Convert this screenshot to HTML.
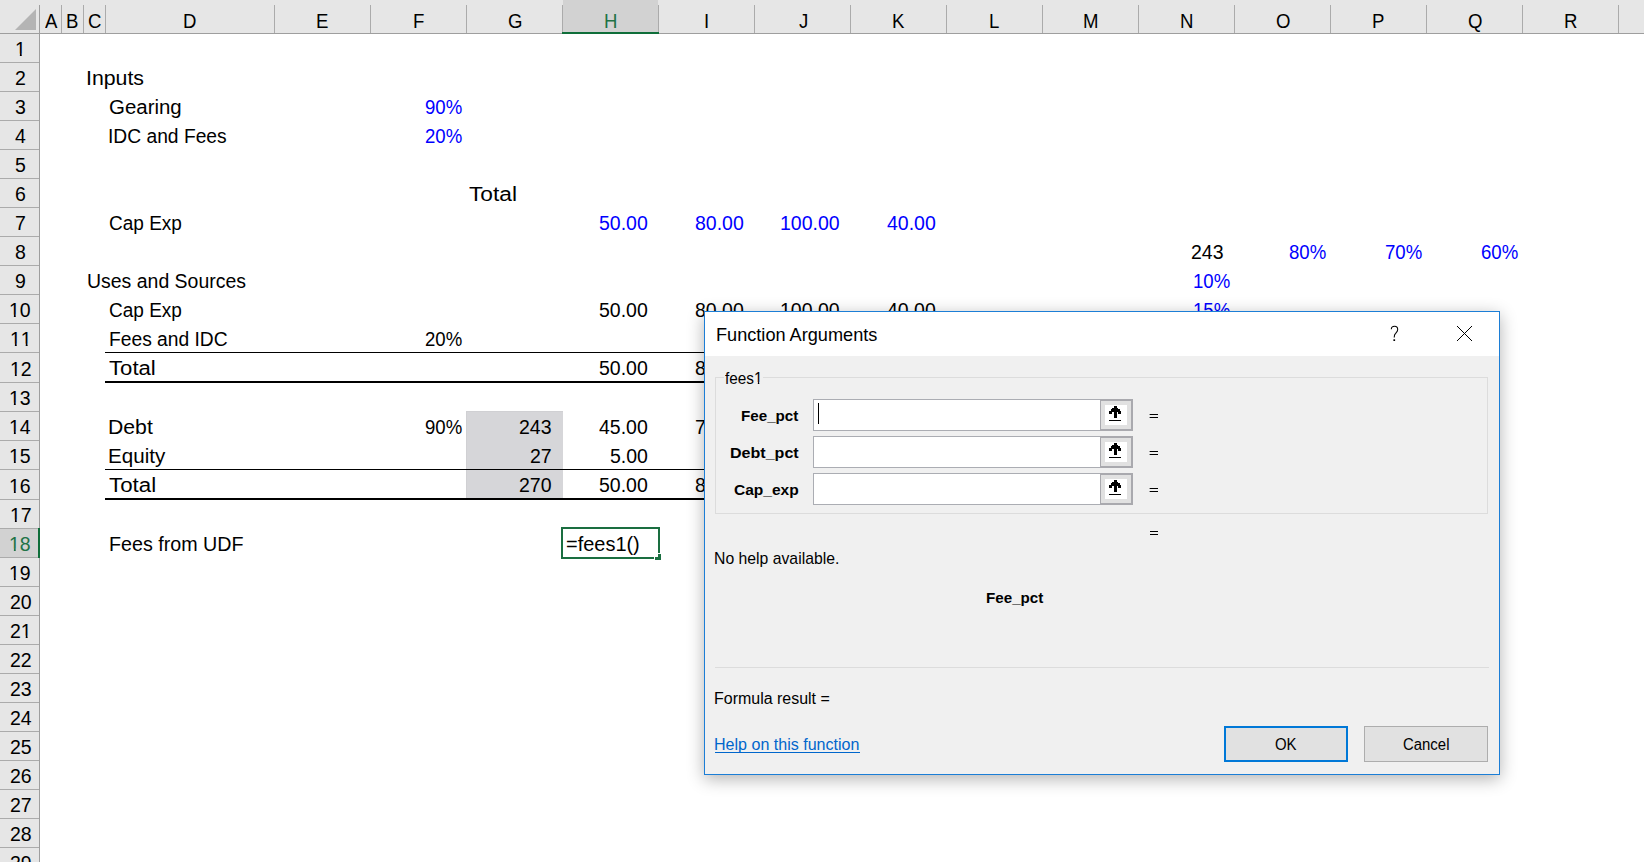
<!DOCTYPE html>
<html><head><meta charset="utf-8"><style>
html,body{margin:0;padding:0;background:#fff;width:1644px;height:862px;overflow:hidden;position:relative}
.t{position:absolute;font-family:"Liberation Sans",sans-serif;white-space:nowrap;line-height:normal;transform-origin:0 0}
.r{position:absolute;box-sizing:content-box}
.one{display:inline-block;clip-path:polygon(0 0,100% 0,100% 0.79em,0.345em 0.79em,0.345em 2em,0.25em 2em,0.25em 0.79em,0 0.79em)}
</style></head><body>
<div class="r" style="left:0px;top:0px;width:1644px;height:33px;background:#E6E6E6;"></div>
<div class="r" style="left:0px;top:33px;width:1644px;height:1px;background:#9E9E9E;"></div>
<div class="r" style="left:0px;top:34px;width:39px;height:828px;background:#E6E6E6;"></div>
<div class="r" style="left:39px;top:5px;width:1px;height:857px;background:#9E9E9E;"></div>
<svg class="r" style="left:0;top:0" width="40" height="34"><polygon points="36,9 36,30 15,30" fill="#B4B4B4"/></svg>
<div class="r" style="left:563px;top:0px;width:95px;height:32px;background:#D2D2D2;"></div>
<div class="r" style="left:61px;top:5px;width:1px;height:28px;background:#ABABAB;"></div>
<div class="r" style="left:83px;top:5px;width:1px;height:28px;background:#ABABAB;"></div>
<div class="r" style="left:105px;top:5px;width:1px;height:28px;background:#ABABAB;"></div>
<div class="r" style="left:274px;top:5px;width:1px;height:28px;background:#ABABAB;"></div>
<div class="r" style="left:370px;top:5px;width:1px;height:28px;background:#ABABAB;"></div>
<div class="r" style="left:466px;top:5px;width:1px;height:28px;background:#ABABAB;"></div>
<div class="r" style="left:562px;top:5px;width:1px;height:28px;background:#ABABAB;"></div>
<div class="r" style="left:658px;top:5px;width:1px;height:28px;background:#ABABAB;"></div>
<div class="r" style="left:754px;top:5px;width:1px;height:28px;background:#ABABAB;"></div>
<div class="r" style="left:850px;top:5px;width:1px;height:28px;background:#ABABAB;"></div>
<div class="r" style="left:946px;top:5px;width:1px;height:28px;background:#ABABAB;"></div>
<div class="r" style="left:1042px;top:5px;width:1px;height:28px;background:#ABABAB;"></div>
<div class="r" style="left:1138px;top:5px;width:1px;height:28px;background:#ABABAB;"></div>
<div class="r" style="left:1234px;top:5px;width:1px;height:28px;background:#ABABAB;"></div>
<div class="r" style="left:1330px;top:5px;width:1px;height:28px;background:#ABABAB;"></div>
<div class="r" style="left:1426px;top:5px;width:1px;height:28px;background:#ABABAB;"></div>
<div class="r" style="left:1522px;top:5px;width:1px;height:28px;background:#ABABAB;"></div>
<div class="r" style="left:1618px;top:5px;width:1px;height:28px;background:#ABABAB;"></div>
<div class="r" style="left:562px;top:32px;width:97px;height:2px;background:#0F6E3A;"></div>
<div class="t" style="left:44.59px;top:9.89px;font-size:20.0px;color:#000;font-weight:400;transform:scaleX(0.9300)">A</div>
<div class="t" style="left:66.31px;top:9.89px;font-size:20.0px;color:#000;font-weight:400;transform:scaleX(0.9300)">B</div>
<div class="t" style="left:87.99px;top:9.89px;font-size:20.0px;color:#000;font-weight:400;transform:scaleX(0.9300)">C</div>
<div class="t" style="left:183.26px;top:9.89px;font-size:20.0px;color:#000;font-weight:400;transform:scaleX(0.9300)">D</div>
<div class="t" style="left:316.22px;top:9.89px;font-size:20.0px;color:#000;font-weight:400;transform:scaleX(0.9300)">E</div>
<div class="t" style="left:412.73px;top:9.89px;font-size:20.0px;color:#000;font-weight:400;transform:scaleX(0.9300)">F</div>
<div class="t" style="left:507.80px;top:9.89px;font-size:20.0px;color:#000;font-weight:400;transform:scaleX(0.9300)">G</div>
<div class="t" style="left:604.08px;top:9.89px;font-size:20.0px;color:#217346;font-weight:400;transform:scaleX(0.9300)">H</div>
<div class="t" style="left:704.22px;top:9.89px;font-size:20.0px;color:#000;font-weight:400;transform:scaleX(0.9300)">I</div>
<div class="t" style="left:798.71px;top:9.89px;font-size:20.0px;color:#000;font-weight:400;transform:scaleX(0.9300)">J</div>
<div class="t" style="left:891.94px;top:9.89px;font-size:20.0px;color:#000;font-weight:400;transform:scaleX(0.9300)">K</div>
<div class="t" style="left:989.17px;top:9.89px;font-size:20.0px;color:#000;font-weight:400;transform:scaleX(0.9300)">L</div>
<div class="t" style="left:1083.06px;top:9.89px;font-size:20.0px;color:#000;font-weight:400;transform:scaleX(0.9300)">M</div>
<div class="t" style="left:1180.08px;top:9.89px;font-size:20.0px;color:#000;font-weight:400;transform:scaleX(0.9300)">N</div>
<div class="t" style="left:1275.57px;top:9.89px;font-size:20.0px;color:#000;font-weight:400;transform:scaleX(0.9300)">O</div>
<div class="t" style="left:1372.31px;top:9.89px;font-size:20.0px;color:#000;font-weight:400;transform:scaleX(0.9300)">P</div>
<div class="t" style="left:1467.57px;top:9.89px;font-size:20.0px;color:#000;font-weight:400;transform:scaleX(0.9300)">Q</div>
<div class="t" style="left:1563.76px;top:9.89px;font-size:20.0px;color:#000;font-weight:400;transform:scaleX(0.9300)">R</div>
<div class="r" style="left:0px;top:529px;width:39px;height:28px;background:#D2D2D2;"></div>
<div class="r" style="left:0px;top:62px;width:39px;height:1px;background:#ABABAB;"></div>
<div class="r" style="left:0px;top:91px;width:39px;height:1px;background:#ABABAB;"></div>
<div class="r" style="left:0px;top:120px;width:39px;height:1px;background:#ABABAB;"></div>
<div class="r" style="left:0px;top:149px;width:39px;height:1px;background:#ABABAB;"></div>
<div class="r" style="left:0px;top:178px;width:39px;height:1px;background:#ABABAB;"></div>
<div class="r" style="left:0px;top:207px;width:39px;height:1px;background:#ABABAB;"></div>
<div class="r" style="left:0px;top:236px;width:39px;height:1px;background:#ABABAB;"></div>
<div class="r" style="left:0px;top:265px;width:39px;height:1px;background:#ABABAB;"></div>
<div class="r" style="left:0px;top:294px;width:39px;height:1px;background:#ABABAB;"></div>
<div class="r" style="left:0px;top:323px;width:39px;height:1px;background:#ABABAB;"></div>
<div class="r" style="left:0px;top:352px;width:39px;height:1px;background:#ABABAB;"></div>
<div class="r" style="left:0px;top:382px;width:39px;height:1px;background:#ABABAB;"></div>
<div class="r" style="left:0px;top:411px;width:39px;height:1px;background:#ABABAB;"></div>
<div class="r" style="left:0px;top:440px;width:39px;height:1px;background:#ABABAB;"></div>
<div class="r" style="left:0px;top:469px;width:39px;height:1px;background:#ABABAB;"></div>
<div class="r" style="left:0px;top:499px;width:39px;height:1px;background:#ABABAB;"></div>
<div class="r" style="left:0px;top:528px;width:39px;height:1px;background:#ABABAB;"></div>
<div class="r" style="left:0px;top:557px;width:39px;height:1px;background:#ABABAB;"></div>
<div class="r" style="left:0px;top:586px;width:39px;height:1px;background:#ABABAB;"></div>
<div class="r" style="left:0px;top:615px;width:39px;height:1px;background:#ABABAB;"></div>
<div class="r" style="left:0px;top:644px;width:39px;height:1px;background:#ABABAB;"></div>
<div class="r" style="left:0px;top:673px;width:39px;height:1px;background:#ABABAB;"></div>
<div class="r" style="left:0px;top:702px;width:39px;height:1px;background:#ABABAB;"></div>
<div class="r" style="left:0px;top:731px;width:39px;height:1px;background:#ABABAB;"></div>
<div class="r" style="left:0px;top:760px;width:39px;height:1px;background:#ABABAB;"></div>
<div class="r" style="left:0px;top:789px;width:39px;height:1px;background:#ABABAB;"></div>
<div class="r" style="left:0px;top:818px;width:39px;height:1px;background:#ABABAB;"></div>
<div class="r" style="left:0px;top:847px;width:39px;height:1px;background:#ABABAB;"></div>
<div class="r" style="left:38px;top:528px;width:2px;height:30px;background:#0F6E3A;"></div>
<div class="t" style="left:14.92px;top:37.89px;font-size:20.0px;color:#000;font-weight:400;transform:scaleX(0.9750)"><span class="one">1</span></div>
<div class="t" style="left:15.19px;top:66.89px;font-size:20.0px;color:#000;font-weight:400;transform:scaleX(0.9750)">2</div>
<div class="t" style="left:15.24px;top:95.89px;font-size:20.0px;color:#000;font-weight:400;transform:scaleX(0.9750)">3</div>
<div class="t" style="left:15.24px;top:124.89px;font-size:20.0px;color:#000;font-weight:400;transform:scaleX(0.9750)">4</div>
<div class="t" style="left:15.19px;top:153.89px;font-size:20.0px;color:#000;font-weight:400;transform:scaleX(0.9750)">5</div>
<div class="t" style="left:15.12px;top:182.89px;font-size:20.0px;color:#000;font-weight:400;transform:scaleX(0.9750)">6</div>
<div class="t" style="left:15.16px;top:211.89px;font-size:20.0px;color:#000;font-weight:400;transform:scaleX(0.9750)">7</div>
<div class="t" style="left:15.19px;top:240.89px;font-size:20.0px;color:#000;font-weight:400;transform:scaleX(0.9750)">8</div>
<div class="t" style="left:15.16px;top:269.89px;font-size:20.0px;color:#000;font-weight:400;transform:scaleX(0.9750)">9</div>
<div class="t" style="left:9.41px;top:298.89px;font-size:20.0px;color:#000;font-weight:400;transform:scaleX(0.9750)"><span class="one">1</span>0</div>
<div class="t" style="left:10.22px;top:327.89px;font-size:20.0px;color:#000;font-weight:400;transform:scaleX(0.9750)"><span class="one">1</span><span class="one">1</span></div>
<div class="t" style="left:9.53px;top:357.89px;font-size:20.0px;color:#000;font-weight:400;transform:scaleX(0.9750)"><span class="one">1</span>2</div>
<div class="t" style="left:9.46px;top:386.89px;font-size:20.0px;color:#000;font-weight:400;transform:scaleX(0.9750)"><span class="one">1</span>3</div>
<div class="t" style="left:9.31px;top:415.89px;font-size:20.0px;color:#000;font-weight:400;transform:scaleX(0.9750)"><span class="one">1</span>4</div>
<div class="t" style="left:9.44px;top:444.89px;font-size:20.0px;color:#000;font-weight:400;transform:scaleX(0.9750)"><span class="one">1</span>5</div>
<div class="t" style="left:9.46px;top:474.89px;font-size:20.0px;color:#000;font-weight:400;transform:scaleX(0.9750)"><span class="one">1</span>6</div>
<div class="t" style="left:9.53px;top:503.89px;font-size:20.0px;color:#000;font-weight:400;transform:scaleX(0.9750)"><span class="one">1</span>7</div>
<div class="t" style="left:9.46px;top:532.89px;font-size:20.0px;color:#217346;font-weight:400;transform:scaleX(0.9750)"><span class="one">1</span>8</div>
<div class="t" style="left:9.49px;top:561.89px;font-size:20.0px;color:#000;font-weight:400;transform:scaleX(0.9750)"><span class="one">1</span>9</div>
<div class="t" style="left:9.66px;top:590.89px;font-size:20.0px;color:#000;font-weight:400;transform:scaleX(0.9750)">20</div>
<div class="t" style="left:9.75px;top:619.89px;font-size:20.0px;color:#000;font-weight:400;transform:scaleX(0.9750)">2<span class="one">1</span></div>
<div class="t" style="left:9.78px;top:648.89px;font-size:20.0px;color:#000;font-weight:400;transform:scaleX(0.9750)">22</div>
<div class="t" style="left:9.70px;top:677.89px;font-size:20.0px;color:#000;font-weight:400;transform:scaleX(0.9750)">23</div>
<div class="t" style="left:9.56px;top:706.89px;font-size:20.0px;color:#000;font-weight:400;transform:scaleX(0.9750)">24</div>
<div class="t" style="left:9.68px;top:735.89px;font-size:20.0px;color:#000;font-weight:400;transform:scaleX(0.9750)">25</div>
<div class="t" style="left:9.70px;top:764.89px;font-size:20.0px;color:#000;font-weight:400;transform:scaleX(0.9750)">26</div>
<div class="t" style="left:9.78px;top:793.89px;font-size:20.0px;color:#000;font-weight:400;transform:scaleX(0.9750)">27</div>
<div class="t" style="left:9.70px;top:822.89px;font-size:20.0px;color:#000;font-weight:400;transform:scaleX(0.9750)">28</div>
<div class="t" style="left:9.73px;top:851.89px;font-size:20.0px;color:#000;font-weight:400;transform:scaleX(0.9750)">29</div>
<div class="r" style="left:466px;top:411px;width:97px;height:87px;background:#D6D6D9;"></div>
<div class="r" style="left:466px;top:411px;width:97px;height:1px;background:#D0D0D3;"></div>
<div class="r" style="left:466px;top:411px;width:1px;height:87px;background:#D0D0D3;"></div>
<div class="r" style="left:105px;top:352px;width:842px;height:1px;background:#000;"></div>
<div class="r" style="left:105px;top:381px;width:842px;height:2px;background:#000;"></div>
<div class="r" style="left:105px;top:469px;width:842px;height:1px;background:#000;"></div>
<div class="r" style="left:105px;top:498px;width:842px;height:2px;background:#000;"></div>
<div class="t" style="left:86.23px;top:66.89px;font-size:20.0px;color:#000;font-weight:400;transform:scaleX(1.0645);">Inputs</div>
<div class="t" style="left:108.58px;top:95.89px;font-size:20.0px;color:#000;font-weight:400;transform:scaleX(1.0218);">Gearing</div>
<div class="t" style="left:425.05px;top:95.89px;font-size:20.0px;color:#0000FF;font-weight:400;transform:scaleX(0.9300)">90%</div>
<div class="t" style="left:108.02px;top:124.89px;font-size:20.0px;color:#000;font-weight:400;transform:scaleX(0.9615);">IDC and Fees</div>
<div class="t" style="left:425.05px;top:124.89px;font-size:20.0px;color:#0000FF;font-weight:400;transform:scaleX(0.9300)">20%</div>
<div class="t" style="left:469.29px;top:182.89px;font-size:20.0px;color:#000;font-weight:400;transform:scaleX(1.1372);">Total</div>
<div class="t" style="left:108.85px;top:211.89px;font-size:20.0px;color:#000;font-weight:400;transform:scaleX(0.9506);">Cap Exp</div>
<div class="t" style="left:598.93px;top:211.89px;font-size:20.0px;color:#0000FF;font-weight:400;transform:scaleX(0.9750)">50.00</div>
<div class="t" style="left:694.93px;top:211.89px;font-size:20.0px;color:#0000FF;font-weight:400;transform:scaleX(0.9750)">80.00</div>
<div class="t" style="left:780.11px;top:211.89px;font-size:20.0px;color:#0000FF;font-weight:400;transform:scaleX(0.9750)">100.00</div>
<div class="t" style="left:886.93px;top:211.89px;font-size:20.0px;color:#0000FF;font-weight:400;transform:scaleX(0.9750)">40.00</div>
<div class="t" style="left:1191.31px;top:240.89px;font-size:20.0px;color:#000;font-weight:400;transform:scaleX(0.9750)">243</div>
<div class="t" style="left:1289.05px;top:240.89px;font-size:20.0px;color:#0000FF;font-weight:400;transform:scaleX(0.9300)">80%</div>
<div class="t" style="left:1385.05px;top:240.89px;font-size:20.0px;color:#0000FF;font-weight:400;transform:scaleX(0.9300)">70%</div>
<div class="t" style="left:1481.05px;top:240.89px;font-size:20.0px;color:#0000FF;font-weight:400;transform:scaleX(0.9300)">60%</div>
<div class="t" style="left:86.79px;top:269.89px;font-size:20.0px;color:#000;font-weight:400;transform:scaleX(0.9730);">Uses and Sources</div>
<div class="t" style="left:1193.05px;top:269.89px;font-size:20.0px;color:#0000FF;font-weight:400;transform:scaleX(0.9300)">10%</div>
<div class="t" style="left:108.85px;top:298.89px;font-size:20.0px;color:#000;font-weight:400;transform:scaleX(0.9506);">Cap Exp</div>
<div class="t" style="left:598.93px;top:298.89px;font-size:20.0px;color:#000;font-weight:400;transform:scaleX(0.9750)">50.00</div>
<div class="t" style="left:694.93px;top:298.89px;font-size:20.0px;color:#000;font-weight:400;transform:scaleX(0.9750)">80.00</div>
<div class="t" style="left:780.11px;top:298.89px;font-size:20.0px;color:#000;font-weight:400;transform:scaleX(0.9750)">100.00</div>
<div class="t" style="left:886.93px;top:298.89px;font-size:20.0px;color:#000;font-weight:400;transform:scaleX(0.9750)">40.00</div>
<div class="t" style="left:1193.05px;top:298.89px;font-size:20.0px;color:#0000FF;font-weight:400;transform:scaleX(0.9300)">15%</div>
<div class="t" style="left:108.61px;top:327.89px;font-size:20.0px;color:#000;font-weight:400;transform:scaleX(0.9616);">Fees and IDC</div>
<div class="t" style="left:425.05px;top:327.89px;font-size:20.0px;color:#000;font-weight:400;transform:scaleX(0.9300)">20%</div>
<div class="t" style="left:108.70px;top:356.89px;font-size:20.0px;color:#000;font-weight:400;transform:scaleX(1.1075);">Total</div>
<div class="t" style="left:598.93px;top:356.89px;font-size:20.0px;color:#000;font-weight:400;transform:scaleX(0.9750)">50.00</div>
<div class="t" style="left:694.93px;top:356.89px;font-size:20.0px;color:#000;font-weight:400;transform:scaleX(0.9750)">80.00</div>
<div class="t" style="left:108.35px;top:415.89px;font-size:20.0px;color:#000;font-weight:400;transform:scaleX(1.0606);">Debt</div>
<div class="t" style="left:425.05px;top:415.89px;font-size:20.0px;color:#000;font-weight:400;transform:scaleX(0.9300)">90%</div>
<div class="t" style="left:519.31px;top:415.89px;font-size:20.0px;color:#000;font-weight:400;transform:scaleX(0.9750)">243</div>
<div class="t" style="left:598.93px;top:415.89px;font-size:20.0px;color:#000;font-weight:400;transform:scaleX(0.9750)">45.00</div>
<div class="t" style="left:694.93px;top:415.89px;font-size:20.0px;color:#000;font-weight:400;transform:scaleX(0.9750)">72.00</div>
<div class="t" style="left:108.40px;top:444.89px;font-size:20.0px;color:#000;font-weight:400;transform:scaleX(1.0297);">Equity</div>
<div class="t" style="left:530.33px;top:444.89px;font-size:20.0px;color:#000;font-weight:400;transform:scaleX(0.9750)">27</div>
<div class="t" style="left:609.80px;top:444.89px;font-size:20.0px;color:#000;font-weight:400;transform:scaleX(0.9750)">5.00</div>
<div class="t" style="left:705.80px;top:444.89px;font-size:20.0px;color:#000;font-weight:400;transform:scaleX(0.9750)">8.00</div>
<div class="t" style="left:108.70px;top:473.89px;font-size:20.0px;color:#000;font-weight:400;transform:scaleX(1.1150);">Total</div>
<div class="t" style="left:519.22px;top:473.89px;font-size:20.0px;color:#000;font-weight:400;transform:scaleX(0.9750)">270</div>
<div class="t" style="left:598.93px;top:473.89px;font-size:20.0px;color:#000;font-weight:400;transform:scaleX(0.9750)">50.00</div>
<div class="t" style="left:694.93px;top:473.89px;font-size:20.0px;color:#000;font-weight:400;transform:scaleX(0.9750)">80.00</div>
<div class="t" style="left:108.58px;top:532.89px;font-size:20.0px;color:#000;font-weight:400;transform:scaleX(0.9844);">Fees from UDF</div>
<div class="r" style="left:561px;top:527px;width:95px;height:28px;border:2px solid #1A6E40"></div>
<div class="r" style="left:654px;top:553px;width:8px;height:8px;background:#fff;"></div>
<div class="r" style="left:658px;top:554px;width:3px;height:6px;background:#1A6E40;"></div>
<div class="r" style="left:655px;top:557px;width:6px;height:3px;background:#1A6E40;"></div>
<div class="t" style="left:565.50px;top:532.89px;font-size:20.0px;color:#000;font-weight:400;transform:scaleX(0.9979);">=fees1()</div>

<div class="r" style="left:704px;top:311px;width:796px;height:464px;box-shadow:0 4px 16px rgba(0,0,0,0.30);"></div>
<div class="r" style="left:704px;top:311px;width:796px;height:464px;background:#1C7ED6;"></div>
<div class="r" style="left:705px;top:312px;width:794px;height:44px;background:#FFFFFF;"></div>
<div class="r" style="left:705px;top:356px;width:794px;height:418px;background:#F0F0F0;"></div>
<div class="t" style="left:715.60px;top:324.16px;font-size:18.6px;color:#000;font-weight:400;transform:scaleX(0.9757);">Function Arguments</div>
<svg class="r" style="left:1385px;top:320px" width="20" height="26"><path d="M6.3,9.2 C6.3,6.8 7.8,6.2 9.6,6.2 C11.5,6.2 12.7,7.4 12.7,9.4 C12.7,11.3 11.5,12.4 10.6,13.4 C9.6,14.4 9.2,15.2 9.2,17.4" stroke="#000" stroke-width="1.05" fill="none"/><rect x="8.4" y="19.3" width="1.7" height="1.7" fill="#000"/></svg>
<svg class="r" style="left:1455px;top:324px" width="20" height="20"><path d="M2,2 L17,17 M17,2 L2,17" stroke="#000" stroke-width="1.0" fill="none"/></svg>
<div class="r" style="left:715px;top:377px;width:771px;height:135px;border:1px solid #DCDCDC"></div>
<div class="r" style="left:724px;top:375px;width:39px;height:6px;background:#F0F0F0;"></div>
<div class="t" style="left:725.37px;top:369.15px;font-size:16.4px;color:#000;font-weight:400;transform:scaleX(0.9360);">fees<span class="one">1</span></div>
<div class="t" style="left:740.77px;top:407.24px;font-size:15.2px;color:#000;font-weight:700;transform:scaleX(0.9993);">Fee_pct</div>
<div class="r" style="left:813px;top:399px;width:320px;height:32px;border:1px solid #ABADB3;background:#fff;box-sizing:border-box"></div>
<div class="r" style="left:1100px;top:399px;border-style:solid;border-color:#A9A9AE;border-width:2px 2px 2px 1px;background:#E1E1E1;box-sizing:border-box;width:33px;height:32px"></div>
<div class="r" style="left:1105px;top:405px;width:22px;height:20px;background:#FFFFFF;"></div>
<svg class="r" style="left:1109px;top:406px" width="12" height="15" shape-rendering="crispEdges"><rect x="5" y="0" width="3" height="12"/><rect x="3" y="2" width="6" height="1"/><rect x="2" y="3" width="9" height="2"/><rect x="0" y="5" width="12" height="1"/><rect x="0" y="6" width="3" height="2"/><rect x="9" y="6" width="3" height="2"/><rect x="0" y="14" width="12" height="1"/></svg>
<div class="r" style="left:1150px;top:414px;width:8px;height:1px;background:#000;"></div>
<div class="r" style="left:1150px;top:417px;width:8px;height:1px;background:#000;"></div>
<div class="r" style="left:1149px;top:414px;width:1px;height:1px;background:#999;"></div>
<div class="r" style="left:1149px;top:417px;width:1px;height:1px;background:#999;"></div>
<div class="t" style="left:729.52px;top:444.24px;font-size:15.2px;color:#000;font-weight:700;transform:scaleX(1.0564);">Debt_pct</div>
<div class="r" style="left:813px;top:436px;width:320px;height:32px;border:1px solid #ABADB3;background:#fff;box-sizing:border-box"></div>
<div class="r" style="left:1100px;top:436px;border-style:solid;border-color:#A9A9AE;border-width:2px 2px 2px 1px;background:#E1E1E1;box-sizing:border-box;width:33px;height:32px"></div>
<div class="r" style="left:1105px;top:442px;width:22px;height:20px;background:#FFFFFF;"></div>
<svg class="r" style="left:1109px;top:443px" width="12" height="15" shape-rendering="crispEdges"><rect x="5" y="0" width="3" height="12"/><rect x="3" y="2" width="6" height="1"/><rect x="2" y="3" width="9" height="2"/><rect x="0" y="5" width="12" height="1"/><rect x="0" y="6" width="3" height="2"/><rect x="9" y="6" width="3" height="2"/><rect x="0" y="14" width="12" height="1"/></svg>
<div class="r" style="left:1150px;top:451px;width:8px;height:1px;background:#000;"></div>
<div class="r" style="left:1150px;top:454px;width:8px;height:1px;background:#000;"></div>
<div class="r" style="left:1149px;top:451px;width:1px;height:1px;background:#999;"></div>
<div class="r" style="left:1149px;top:454px;width:1px;height:1px;background:#999;"></div>
<div class="t" style="left:733.88px;top:481.24px;font-size:15.2px;color:#000;font-weight:700;transform:scaleX(1.0221);">Cap_exp</div>
<div class="r" style="left:813px;top:473px;width:320px;height:32px;border:1px solid #ABADB3;background:#fff;box-sizing:border-box"></div>
<div class="r" style="left:1100px;top:473px;border-style:solid;border-color:#A9A9AE;border-width:2px 2px 2px 1px;background:#E1E1E1;box-sizing:border-box;width:33px;height:32px"></div>
<div class="r" style="left:1105px;top:479px;width:22px;height:20px;background:#FFFFFF;"></div>
<svg class="r" style="left:1109px;top:480px" width="12" height="15" shape-rendering="crispEdges"><rect x="5" y="0" width="3" height="12"/><rect x="3" y="2" width="6" height="1"/><rect x="2" y="3" width="9" height="2"/><rect x="0" y="5" width="12" height="1"/><rect x="0" y="6" width="3" height="2"/><rect x="9" y="6" width="3" height="2"/><rect x="0" y="14" width="12" height="1"/></svg>
<div class="r" style="left:1150px;top:488px;width:8px;height:1px;background:#000;"></div>
<div class="r" style="left:1150px;top:491px;width:8px;height:1px;background:#000;"></div>
<div class="r" style="left:1149px;top:488px;width:1px;height:1px;background:#999;"></div>
<div class="r" style="left:1149px;top:491px;width:1px;height:1px;background:#999;"></div>
<div class="r" style="left:818px;top:403px;width:1px;height:21px;background:#000;"></div>
<div class="r" style="left:1150px;top:531px;width:8px;height:1px;background:#000;"></div>
<div class="r" style="left:1150px;top:534px;width:8px;height:1px;background:#000;"></div>
<div class="t" style="left:714.20px;top:549.43px;font-size:16.2px;color:#000;font-weight:400;transform:scaleX(0.9738);">No help available.</div>
<div class="t" style="left:985.87px;top:589.24px;font-size:15.2px;color:#000;font-weight:700;transform:scaleX(0.9993);">Fee_pct</div>
<div class="r" style="left:715px;top:667px;width:774px;height:1px;background:#DCDCDC;"></div>
<div class="t" style="left:714.48px;top:689.70px;font-size:15.8px;color:#000;font-weight:400;transform:scaleX(1.0107);">Formula result =</div>
<div class="t" style="left:714.48px;top:736.40px;font-size:15.8px;color:#0066CC;font-weight:400;transform:scaleX(1.0162);">Help on this function</div>
<div class="r" style="left:715px;top:752px;width:145px;height:1px;background:#0066CC;"></div>
<div class="r" style="left:1224px;top:726px;width:124px;height:36px;border:2px solid #0078D7;background:#E1E1E1;box-sizing:border-box"></div>
<div class="t" style="left:1274.69px;top:735.70px;font-size:15.8px;color:#000;font-weight:400;transform:scaleX(0.9459);">OK</div>
<div class="r" style="left:1364px;top:726px;width:124px;height:36px;border:1px solid #ADADAD;background:#E1E1E1;box-sizing:border-box"></div>
<div class="t" style="left:1402.85px;top:735.70px;font-size:15.8px;color:#000;font-weight:400;transform:scaleX(0.9446);">Cancel</div>

</body></html>
